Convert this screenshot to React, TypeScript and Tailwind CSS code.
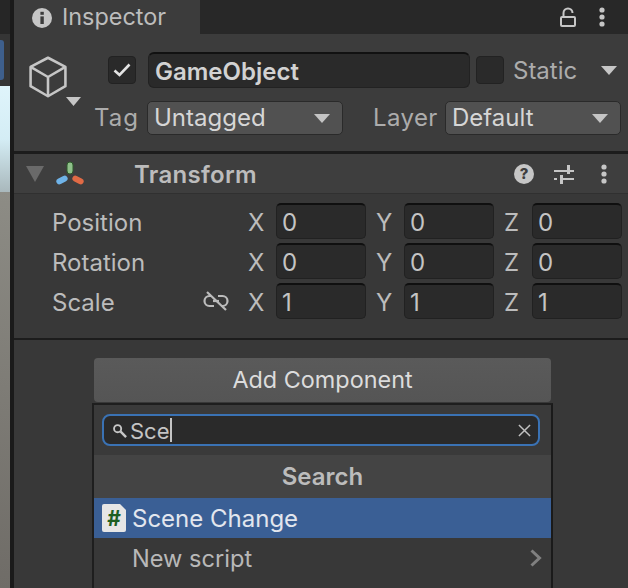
import React from 'react';

const Caret = ({ className = '' }: { className?: string }) => (
  <svg viewBox="0 0 16 9" preserveAspectRatio="none" className={`w-4 h-[9px] shrink-0 ${className}`}>
    <path d="M0 0H16L8 9Z" fill="currentColor" />
  </svg>
);

const Dots = ({ className = '' }: { className?: string }) => (
  <svg viewBox="0 0 6 20" className={`w-[6px] h-5 ${className}`}>
    <circle cx="3" cy="3" r="2.6" fill="currentColor" />
    <circle cx="3" cy="10" r="2.6" fill="currentColor" />
    <circle cx="3" cy="17" r="2.6" fill="currentColor" />
  </svg>
);

const Dropdown = ({ label, width }: { label: string; width: string }) => (
  <div className={`${width} h-[34px] flex items-center justify-between pl-[6px] pr-[12px] rounded-[5px] bg-[#515151] border border-[#2a2a2a] text-[24px] text-[#d6d6d6]`}>
    <span className="leading-none">{label}</span>
    <Caret className="text-[#c4c4c4]" />
  </div>
);

const Axis = ({ axis, value }: { axis: string; value: string }) => (
  <div className="flex items-center">
    <span className="w-[28px] pt-[4px] text-[#bcbcbc] text-[24px] leading-none">{axis}</span>
    <div className="w-[90px] h-[36px] pl-[5px] pt-[2px] flex items-center rounded-[5px] bg-[#2a2a2a] border border-[#212121] border-t-[#0f0f0f] border-t-2 text-[24px] text-[#c4c4c4] leading-none">
      {value}
    </div>
  </div>
);

const TransformRow = ({ label, value, link }: { label: string; value: string; link?: boolean }) => (
  <div className="h-[36px] flex items-center">
    <span className="w-[148px] pt-[4px] text-[24px] leading-none text-[#bcbcbc]">{label}</span>
    <div className="w-[48px] flex">
      {link && (
        <svg viewBox="0 0 26 20" className="ml-[3px] w-[26px] h-5 text-[#bcbcbc]" fill="none" stroke="currentColor" strokeWidth="2.2">
          <path d="M8 5H6.5a5 5 0 0 0 0 10H11" />
          <path d="M15 5h4.5a5 5 0 0 1 0 10H18" />
          <path d="M10 10h6" />
          <path d="M4 1 23 19" />
        </svg>
      )}
    </div>
    <div className="flex gap-[10px]">
      <Axis axis="X" value={value} />
      <Axis axis="Y" value={value} />
      <Axis axis="Z" value={value} />
    </div>
  </div>
);

export default function App() {
  return (
    <div className="relative w-[628px] h-[588px] overflow-hidden flex bg-[#383838] text-[#d0d0d0]" style={{ fontFamily: 'Inter, sans-serif' }}>
      {/* bit of the scene view on the left */}
      <div className="w-[10px] shrink-0 flex flex-col bg-[#2a2a2a]">
        <div className="h-[34px] bg-[#262626]" />
        <div className="h-[52px] bg-[#353535] pt-[6px]">
          <div className="w-[4px] h-[40px] bg-[#3e5f8c] rounded-r-[3px]" />
        </div>
        <div className="h-[106px] bg-gradient-to-b from-[#dff4fb] via-[#d4edf5] to-[#a9b8bc]" />
        <div className="flex-1 bg-gradient-to-b from-[#8d8c85] to-[#6f6c67]" />
      </div>
      <div className="w-[4px] shrink-0 bg-[#1a1a1a]" />

      <div className="flex-1 min-w-0 flex flex-col">
        {/* tab bar */}
        <div className="h-[34px] flex items-center justify-between bg-[#282828]">
          <div className="w-[186px] h-[34px] flex items-center gap-[10px] pl-[18px] bg-[#3c3c3c] text-[23.4px] text-[#bdbdbd]">
            <svg viewBox="0 0 20 20" className="w-5 h-5 mt-[1px] text-[#c6c6c6]">
              <circle cx="10" cy="10" r="10" fill="currentColor" />
              <rect x="8.4" y="8.4" width="3.4" height="7.6" fill="#3c3c3c" />
              <rect x="8.4" y="3.8" width="3.4" height="3" fill="#3c3c3c" />
            </svg>
            <span className="leading-none">Inspector</span>
          </div>
          <div className="flex items-center gap-[23px] pr-[23px] text-[#c6c6c6]">
            <svg viewBox="0 0 16 20" className="w-4 h-5" fill="none" stroke="currentColor" strokeWidth="2">
              <rect x="1" y="10" width="14" height="9" rx="1" />
              <path d="M3.5 10V6a4.5 4.5 0 0 1 9 0" />
            </svg>
            <Dots />
          </div>
        </div>

        {/* object header */}
        <div className="h-[117px] flex flex-col bg-[#3c3c3c] pt-[18px] pl-[11px]">
          <div className="flex">
            <div className="w-[83px] shrink-0">
              <svg viewBox="0 0 46 48" className="mt-[3px] w-[46px] h-[44px] text-[#c6c6c6]" fill="none" stroke="currentColor" strokeWidth="2.8" strokeLinejoin="round">
                <path d="M23 3 42 13V34L23 45 4 34V13Z" />
                <path d="M4 13 23 24 42 13M23 24V45" />
              </svg>
              <Caret className="ml-[41px] -mt-[2px] w-[15px] text-[#c6c6c6]" />
            </div>
            <div className="flex-1 flex flex-col">
              <div className="flex items-center h-[36px]">
                <div className="w-[28px] h-[28px] mr-[12px] flex items-center justify-center rounded-[4px] bg-[#2a2a2a] border border-[#222]">
                  <svg viewBox="0 0 18 14" className="w-[18px] h-[14px]" fill="none" stroke="#e4e4e4" strokeWidth="2.6">
                    <path d="M1.5 7.5 6.5 12 16.5 1.5" />
                  </svg>
                </div>
                <div className="w-[322px] h-[36px] pl-[6px] pt-[2px] flex items-center rounded-[6px] bg-[#2a2a2a] border border-[#222] border-t-2 border-t-[#111] text-[24px] font-semibold text-[#d2d2d2] leading-none">
                  GameObject
                </div>
                <div className="ml-[6px] w-[28px] h-[28px] rounded-[4px] bg-[#2a2a2a] border border-[#222]" />
                <span className="ml-[9px] pt-[2px] text-[24px] text-[#acacac] leading-none">Static</span>
                <Caret className="ml-[24px] text-[#c6c6c6]" />
              </div>
              <div className="mt-[13px] -ml-[14px] flex items-center">
                <span className="w-[53px] tracking-[1px] text-[24px] leading-none text-[#acacac]">Tag</span>
                <Dropdown label="Untagged" width="w-[196px]" />
                <span className="ml-[30px] w-[72px] tracking-[0.4px] text-[24px] leading-none text-[#acacac]">Layer</span>
                <Dropdown label="Default" width="w-[176px]" />
              </div>
            </div>
          </div>
        </div>
        <div className="h-[3px] bg-[#1c1c1c]" />

        {/* transform header */}
        <div className="h-[40px] flex items-center bg-[#3e3e3e] border-b border-[#303030]">
          <Caret className="ml-[12px] w-[18px] h-[16px] text-[#6a6a6a]" />
          <svg viewBox="0 0 28 26" className="ml-[12px] w-[28px] h-[26px]">
            <rect x="11" y="1" width="6" height="12" rx="3" fill="#8fc08a" stroke="#2c5a2a" />
            <rect x="0" y="16" width="12" height="6" rx="3" fill="#6fb3e8" transform="rotate(-28 6 19)" />
            <rect x="16" y="16" width="12" height="6" rx="3" fill="#e06a45" transform="rotate(28 22 19)" />
          </svg>
          <span className="ml-[50px] pt-[2px] tracking-[0.3px] text-[24px] font-semibold text-[#bcbcbc] leading-none">Transform</span>
          <div className="ml-auto flex items-center text-[#c6c6c6]">
            <div className="w-5 h-5 rounded-full bg-[#c6c6c6] flex items-center justify-center text-[#3e3e3e] text-[15px] font-extrabold leading-none">?</div>
            <svg viewBox="0 0 20 20" className="ml-[20px] w-5 h-5" fill="none" stroke="currentColor" strokeWidth="2">
              <path d="M0 7h20M0 15h3M7 15h13" />
              <rect x="13" y="1" width="3" height="9" fill="currentColor" stroke="none" />
              <rect x="6" y="11" width="3" height="9" fill="currentColor" stroke="none" />
            </svg>
            <Dots className="ml-[27px] mr-[21px]" />
          </div>
        </div>

        {/* transform fields */}
        <div className="h-[144px] pl-[38px] pt-[9px] flex flex-col gap-[4px] bg-[#383838]">
          <TransformRow label="Position" value="0" />
          <TransformRow label="Rotation" value="0" />
          <TransformRow label="Scale" value="1" link />
        </div>
        <div className="h-[2px] bg-[#1c1c1c]" />

        <div className="mt-[18px] ml-[80px] w-[457px] h-[44px] flex items-center justify-center rounded-[4px] bg-gradient-to-b from-[#5a5a5a] to-[#555555] text-[23.4px] text-[#dcdcdc] leading-none">
          Add Component
        </div>
      </div>

      {/* add component popup */}
      <div className="absolute left-[92px] top-[403px] w-[461px] h-[190px] flex flex-col bg-[#383838] border-2 border-[#1e1e1e] border-r-[#1a1a1a] text-[24px]">
        <div className="h-[50px] pt-[9px] pl-[8px] bg-[#3a3a3a]">
          <div className="w-[438px] h-[32px] flex items-center rounded-[8px] border-2 border-[#3a72b4] bg-[#2a2a2a] pl-[8px] pr-[7px]">
            <svg viewBox="0 0 16 16" className="w-[15px] h-[15px] text-[#c8c8c8]" fill="none" stroke="currentColor">
              <circle cx="6" cy="6" r="3.8" strokeWidth="2" />
              <path d="M9 9 15 15" strokeWidth="2.6" />
            </svg>
            <span className="ml-[3px] text-[22px] text-[#c4c4c4] leading-none border-r-2 border-[#c4c4c4] pt-[2px]">Sce</span>
            <svg viewBox="0 0 14 14" className="ml-auto w-[13px] h-[13px] text-[#c0c0c0]" fill="none" stroke="currentColor" strokeWidth="1.6">
              <path d="M1 1 13 13M13 1 1 13" />
            </svg>
          </div>
        </div>
        <div className="h-[43px] flex items-center justify-center bg-[#444444] font-semibold text-[#bcbcbc] leading-none">
          Search
        </div>
        <div className="h-[40px] flex items-center pl-[8px] bg-[#3a5f95] text-[#e2e6ee] leading-none">
          <div className="relative w-[24px] h-[28px] flex items-center justify-center rounded-[2px] bg-[#e6e6e6] text-[#1e5f22] text-[21px] font-bold">
            #
            <div className="absolute right-0 top-0 w-[6px] h-[6px] bg-[#3a5f95] [clip-path:polygon(0_0,100%_0,100%_100%)]" />
          </div>
          <span className="ml-[6px] pt-[2px]">Scene Change</span>
        </div>
        <div className="h-[40px] flex items-center justify-between pl-[38px] pr-[9px] text-[23.6px] text-[#b8b8b8] leading-none">
          <span className="pt-[2px]">New script</span>
          <svg viewBox="0 0 12 18" className="w-[12px] h-[18px] text-[#808080]" fill="none" stroke="currentColor" strokeWidth="3">
            <path d="M1.5 1.5 9.5 9 1.5 16.5" />
          </svg>
        </div>
      </div>
    </div>
  );
}
